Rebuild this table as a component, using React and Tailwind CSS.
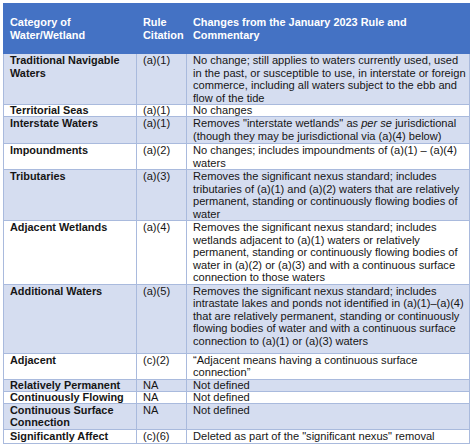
import React from "react";

const rows = [
  { h: "h-[51px]", b: true, c: ["Traditional Navigable", "Waters"], r: ["(a)(1)"], t: ["No change; still applies to waters currently used, used", "in the past, or susceptible to use, in interstate or foreign", "commerce, including all waters subject to the ebb and", "flow of the tide"] },
  { h: "h-[12px]", b: false, tight: true, c: ["Territorial Seas"], r: ["(a)(1)"], t: ["No changes"] },
  { h: "h-[27px]", b: true, c: ["Interstate Waters"], r: ["(a)(1)"], t: [<>Removes "interstate wetlands" as <i>per se</i> jurisdictional</>, "(though they may be jurisdictional via (a)(4) below)"] },
  { h: "h-[25px]", b: false, c: ["Impoundments"], r: ["(a)(2)"], t: ["No changes; includes impoundments of (a)(1) \u2013 (a)(4)", "waters"] },
  { h: "h-[50px]", b: true, c: ["Tributaries"], r: ["(a)(3)"], t: ["Removes the significant nexus standard; includes", "tributaries of (a)(1) and (a)(2) waters that are relatively", "permanent, standing or continuously flowing bodies of", "water"] },
  { h: "h-[63px]", b: false, c: ["Adjacent Wetlands"], r: ["(a)(4)"], t: ["Removes the significant nexus standard; includes", "wetlands adjacent to (a)(1) waters or relatively", "permanent, standing or continuously flowing bodies of", "water in (a)(2) or (a)(3) and with a continuous surface", "connection to those waters"] },
  { h: "h-[69px]", b: true, c: ["Additional Waters"], r: ["(a)(5)"], t: ["Removes the significant nexus standard; includes", "intrastate lakes and ponds not identified in (a)(1)\u2013(a)(4)", "that are relatively permanent, standing or continuously", "flowing bodies of water and with a continuous surface", "connection to (a)(1) or (a)(3) waters"] },
  { h: "h-[26px]", b: false, c: ["Adjacent"], r: ["(c)(2)"], t: ["\u201CAdjacent means having a continuous surface", "connection\u201D"] },
  { h: "h-[12px]", b: true, tight: true, c: ["Relatively Permanent"], r: ["NA"], t: ["Not defined"] },
  { h: "h-[12px]", b: false, tight: true, c: ["Continuously Flowing"], r: ["NA"], t: ["Not defined"] },
  { h: "h-[26px]", b: true, c: ["Continuous Surface", "Connection"], r: ["NA"], t: ["Not defined"] },
  { h: "h-[14px]", b: false, c: ["Significantly Affect"], r: ["(c)(6)"], t: ["Deleted as part of the \"significant nexus\" removal"] },
];

function Lines({ items }) {
  return items.map((l, i) => (
    <div key={i} className="whitespace-nowrap">{l}</div>
  ));
}

export default function App() {
  return (
    <div className="w-[474px] h-[445px] bg-white overflow-hidden pt-[3px] pl-[3px]" style={{ fontFamily: '"Liberation Sans", Arial, sans-serif' }}>
      <table className="table-fixed border-collapse w-[466px] text-[#151515]">
        <colgroup>
          <col className="w-[133px]" />
          <col className="w-[50px]" />
          <col className="w-[283px]" />
        </colgroup>
        <thead>
          <tr className="bg-[#4472c4] text-white h-[50px] text-[10.9px] leading-[12.5px]">
            <th className="text-left align-middle pl-[6px] pr-0 pt-0 border border-[#4472c4] font-bold">
              <Lines items={["Category of", "Water/Wetland"]} />
            </th>
            <th className="text-left align-middle pl-[6px] pr-0 pt-0 border border-[#4472c4] font-bold">
              <Lines items={["Rule", "Citation"]} />
            </th>
            <th className="text-left align-middle pl-[6px] pr-0 pt-0 border border-[#4472c4] font-bold">
              <Lines items={["Changes from the January 2023 Rule and", "Commentary"]} />
            </th>
          </tr>
        </thead>
        <tbody>
          {rows.map((row, i) => (
            <tr key={i} className={(row.b ? "bg-[#d5ddf0] " : "bg-white ") + row.h + (row.tight ? " leading-[11px]" : " leading-[12.5px]")}>
              <td className="align-top pl-[6px] pr-0 py-0 border border-[#a9badd] font-bold text-[10.9px] overflow-hidden">
                <Lines items={row.c} />
              </td>
              <td className="align-top pl-[6px] pr-0 py-0 border border-[#a9badd] text-[11.1px] overflow-hidden">
                <Lines items={row.r} />
              </td>
              <td className="align-top pl-[6px] pr-0 py-0 border border-[#a9badd] text-[11.1px]">
                <Lines items={row.t} />
              </td>
            </tr>
          ))}
        </tbody>
      </table>
    </div>
  );
}
